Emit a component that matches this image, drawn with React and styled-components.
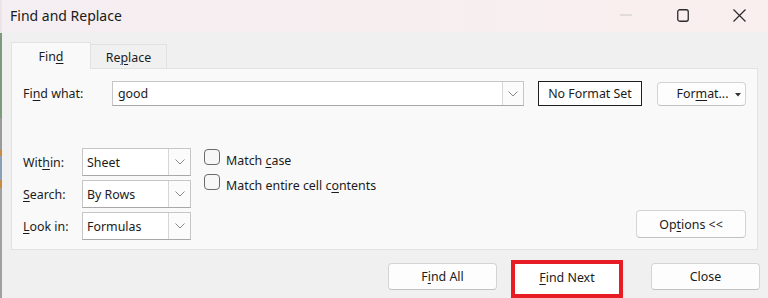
import React from "react";
import styled, { createGlobalStyle } from "styled-components";

const GlobalStyle = createGlobalStyle`
  html, body { margin: 0; padding: 0; background: #f0f0f0; }
  body { font-family: "Noto Sans", "Open Sans", sans-serif; color: #1b1b1b; }
  * { box-sizing: border-box; }
`;

const FS = "12.4px";

const Screen = styled.div`
  width: 768px;
  height: 298px;
  display: flex;
  overflow: hidden;
`;

const BackStrip = styled.div`
  width: 2px;
  flex: none;
  background: linear-gradient(
    to bottom,
    #ece4e6 0px, #ece4e6 33px,
    #7d9a7c 33px, #7d9a7c 118px,
    #9a9a9a 118px, #9a9a9a 150px,
    #c88a3c 150px, #c88a3c 156px,
    #8aa0b8 156px, #8aa0b8 180px,
    #c88a3c 180px, #c88a3c 188px,
    #a0a0a0 188px, #a0a0a0 298px
  );
`;

const Dialog = styled.div`
  flex: 1;
  display: flex;
  flex-direction: column;
  background: #f0f0f0;
`;

const TitleBar = styled.div`
  height: 33px;
  display: flex;
  align-items: center;
  background: linear-gradient(to right, #f5eef2, #f9efee);
  padding-left: 8px;
`;

const Title = styled.div`
  flex: 1;
  font-size: 14px;
  padding-bottom: 1px;
  color: #1a1a1a;
`;

const Caption = styled.div`
  width: 57px;
  height: 30px;
  display: flex;
  align-items: center;
  justify-content: center;
  align-self: flex-start;
`;

const Body = styled.div`
  display: flex;
  flex-direction: column;
  padding: 10px 10px 0 9px;
`;

const TabRow = styled.div`
  display: flex;
  align-items: flex-end;
  height: 27px;
  margin-bottom: -1px;
  position: relative;
  z-index: 1;
`;

const Tab = styled.div`
  display: flex;
  align-items: center;
  justify-content: center;
  font-size: ${FS};
  width: ${(p) => p.$w}px;
  height: ${(p) => (p.$active ? 27 : 25)}px;
  background: ${(p) => (p.$active ? "#f9f9f9" : "#f0f0f0")};
  border: 1px solid #e2e2e2;
  border-bottom: ${(p) => (p.$active ? "none" : "1px solid #e2e2e2")};
  border-left: ${(p) => (p.$active ? "1px solid #e2e2e2" : "none")};
  padding-top: ${(p) => (p.$active ? 0 : 1)}px;
`;

const Panel = styled.div`
  height: 182px;
  display: flex;
  flex-direction: column;
  justify-content: space-between;
  background: #f9f9f9;
  border: 1px solid #e2e2e2;
  padding: 12px 11px 9px 11px;
`;

const FindRow = styled.div`
  display: flex;
  align-items: center;
`;

const Label = styled.div`
  font-size: ${FS};
  width: ${(p) => p.$w}px;
  flex: none;
`;

const Combo = styled.div`
  width: ${(p) => p.$w}px;
  height: ${(p) => p.$h}px;
  flex: none;
  display: flex;
  background: #fff;
  border: 1px solid #c6c6c6;
  border-bottom-color: #a8a8a8;
`;

const ComboText = styled.div`
  flex: 1;
  display: flex;
  align-items: center;
  padding-left: ${(p) => p.$pad}px;
  font-size: ${FS};
`;

const ComboArrow = styled.div`
  width: ${(p) => p.$w}px;
  display: flex;
  align-items: center;
  justify-content: center;
  border-left: 1px solid #d6d6d6;
  background: #fbfbfb;
`;

const FormatBox = styled.div`
  margin-left: 14px;
  width: 104px;
  height: 25px;
  border: 1.5px solid #1e1e1e;
  display: flex;
  align-items: center;
  justify-content: center;
  font-size: ${FS};
  background: #fff;
`;

const Button = styled.div`
  width: ${(p) => p.$w}px;
  height: ${(p) => p.$h}px;
  flex: none;
  display: flex;
  align-items: center;
  justify-content: center;
  font-size: ${FS};
  background: #fdfdfd;
  border: 1px solid #d4d4d4;
  border-bottom-color: #c2c2c2;
  border-radius: 4px;
  position: relative;
`;

const FormatButton = styled(Button)`
  margin-left: 15px;
  padding-left: 2px;
`;

const Caret = styled.svg`
  position: absolute;
  right: 4px;
  top: 10px;
`;

const Lower = styled.div`
  display: flex;
  align-items: flex-end;
`;

const SelectGrid = styled.div`
  display: grid;
  grid-template-columns: 59px 109px;
  grid-auto-rows: 28px;
  row-gap: 4px;
  align-items: center;
`;

const Checks = styled.div`
  align-self: flex-start;
  margin-left: 13px;
  margin-top: 1px;
  display: flex;
  flex-direction: column;
  gap: 9px;
`;

const CheckRow = styled.div`
  display: flex;
  align-items: center;
  gap: 6px;
  font-size: ${FS};
  height: 16px;
`;

const Box = styled.div`
  width: 16px;
  height: 16px;
  border: 1px solid #6b6b6b;
  border-radius: 4px;
  background: #f7f7f7;
`;

const CheckLabel = styled.span`
  padding-top: 6px;
`;

const Spacer = styled.div`
  flex: 1;
`;

const OptionsButton = styled(Button)`
  margin-bottom: 2px;
`;

const Footer = styled.div`
  flex: 1;
  display: flex;
  align-items: flex-start;
  justify-content: flex-end;
  padding: 13px 8px 0 0;
`;

const Highlight = styled.div`
  margin: -3px 0 0 14px;
  width: 112px;
  height: 38px;
  border: 4px solid #e81c24;
  background: #fff;
  display: flex;
  align-items: center;
  justify-content: center;
  font-size: ${FS};
  padding-bottom: 3px;
`;

const CloseButton = styled(Button)`
  margin-left: 28px;
`;

const U = styled.span`
  text-decoration: underline;
  text-underline-offset: 2px;
  text-decoration-thickness: 1px;
`;

const Chevron = () => (
  <svg width="10" height="6" viewBox="0 0 10 6">
    <path d="M0.5 0.5 L5 5 L9.5 0.5" fill="none" stroke="#8a8a8a" strokeWidth="1" />
  </svg>
);

export default function App() {
  return (
    <>
      <GlobalStyle />
      <Screen>
        <BackStrip />
        <Dialog>
          <TitleBar>
            <Title>Find and Replace</Title>
            <Caption>
              <svg width="12" height="2" viewBox="0 0 12 2">
                <path d="M0 1 H12" stroke="#c9c9c9" strokeWidth="1" />
              </svg>
            </Caption>
            <Caption>
              <svg width="12" height="13" viewBox="0 0 12 13">
                <rect x="0.75" y="0.75" width="10.5" height="11.5" rx="2" fill="none" stroke="#2b2b2b" strokeWidth="1.3" />
              </svg>
            </Caption>
            <Caption>
              <svg width="13" height="13" viewBox="0 0 13 13">
                <path d="M0.5 0.5 L12.5 12.5 M12.5 0.5 L0.5 12.5" stroke="#2b2b2b" strokeWidth="1.2" />
              </svg>
            </Caption>
          </TitleBar>
          <Body>
            <TabRow>
              <Tab $active $w={80}>
                Fin<U>d</U>
              </Tab>
              <Tab $w={76}>
                Re<U>p</U>lace
              </Tab>
            </TabRow>
            <Panel>
              <FindRow>
                <Label $w={89}>
                  Fi<U>n</U>d what:
                </Label>
                <Combo $w={412} $h={25}>
                  <ComboText $pad={5}>good</ComboText>
                  <ComboArrow $w={21}>
                    <Chevron />
                  </ComboArrow>
                </Combo>
                <FormatBox>No Format Set</FormatBox>
                <FormatButton $w={89} $h={24}>
                  For<U>m</U>at...
                  <Caret width="6" height="4" viewBox="0 0 6 4">
                    <path d="M0 0 H6 L3 3.5 Z" fill="#333" />
                  </Caret>
                </FormatButton>
              </FindRow>
              <Lower>
                <SelectGrid>
                  <Label>
                    Wit<U>h</U>in:
                  </Label>
                  <Combo $w={109} $h={28}>
                    <ComboText $pad={4}>Sheet</ComboText>
                    <ComboArrow $w={22}>
                      <Chevron />
                    </ComboArrow>
                  </Combo>
                  <Label>
                    <U>S</U>earch:
                  </Label>
                  <Combo $w={109} $h={28}>
                    <ComboText $pad={4}>By Rows</ComboText>
                    <ComboArrow $w={22}>
                      <Chevron />
                    </ComboArrow>
                  </Combo>
                  <Label>
                    <U>L</U>ook in:
                  </Label>
                  <Combo $w={109} $h={28}>
                    <ComboText $pad={4}>Formulas</ComboText>
                    <ComboArrow $w={22}>
                      <Chevron />
                    </ComboArrow>
                  </Combo>
                </SelectGrid>
                <Checks>
                  <CheckRow>
                    <Box />
                    <CheckLabel>
                      Match <U>c</U>ase
                    </CheckLabel>
                  </CheckRow>
                  <CheckRow>
                    <Box />
                    <CheckLabel>
                      Match entire cell c<U>o</U>ntents
                    </CheckLabel>
                  </CheckRow>
                </Checks>
                <Spacer />
                <OptionsButton $w={110} $h={28}>
                  Op<U>t</U>ions &lt;&lt;
                </OptionsButton>
              </Lower>
            </Panel>
          </Body>
          <Footer>
            <Button $w={109} $h={27}>
              F<U>i</U>nd All
            </Button>
            <Highlight>
              <U>F</U>ind Next
            </Highlight>
            <CloseButton $w={109} $h={27}>
              Close
            </CloseButton>
          </Footer>
        </Dialog>
      </Screen>
    </>
  );
}
